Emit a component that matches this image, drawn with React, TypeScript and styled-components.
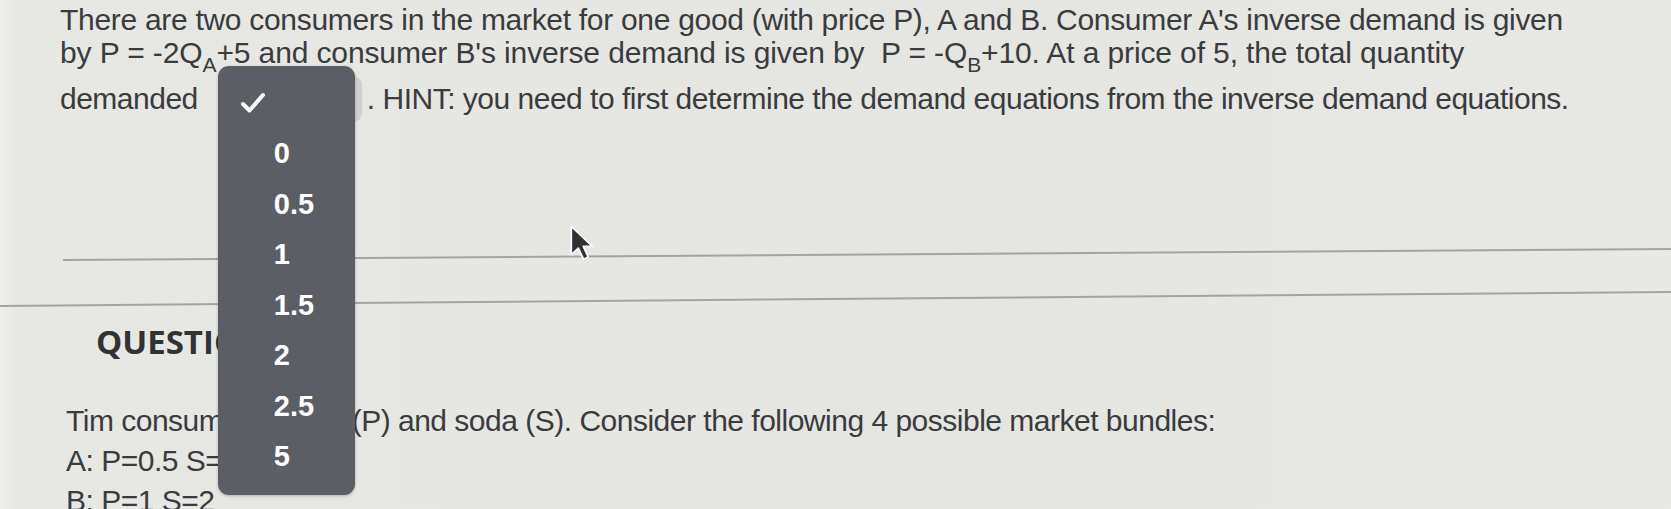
import React from "react";
import styled, { createGlobalStyle } from "styled-components";

const GlobalStyle = createGlobalStyle`
  html, body {
    margin: 0;
    padding: 0;
    background: #e6e6e3;
  }
  body {
    font-family: "Liberation Sans", Arial, sans-serif;
    overflow: hidden;
  }
`;

const Page = styled.div`
  position: relative;
  width: 1671px;
  height: 509px;
  overflow: hidden;
  background: linear-gradient(90deg, #efefed 0px, #e7e7e4 14px, #e5e5e2 60%, #e8e8e5 100%);
  color: #393b3d;
`;

const Section = styled.div<{ $pad: number; $top?: number }>`
  padding-left: ${(p) => p.$pad}px;
  padding-top: ${(p) => p.$top ?? 0}px;
`;

const Line = styled.div<{ $spacing: number }>`
  font-size: 30px;
  line-height: 33px;
  letter-spacing: ${(p) => p.$spacing}px;
  white-space: nowrap;
`;

const Sub = styled.span`
  font-size: 21px;
  line-height: 0;
  vertical-align: -9px;
`;

const SelectLine = styled.div`
  display: flex;
  align-items: center;
  height: 46px;
  margin-top: 7px;
  font-size: 30px;
  letter-spacing: -0.5px;
  white-space: nowrap;
`;

const SelectBox = styled.div`
  position: relative;
  width: 144px;
  height: 46px;
  margin-left: 20px;
  margin-right: 5px;
  border-radius: 9px;
  background: #cfd0ce;
`;

const Menu = styled.div`
  position: absolute;
  left: 0;
  top: -10px;
  z-index: 2;
  width: 137px;
  box-sizing: border-box;
  padding: 12px 0 13px;
  border-radius: 11px;
  background: #5b5f65;
  box-shadow: 0 1px 3px rgba(0, 0, 0, 0.25);
  display: flex;
  flex-direction: column;
  letter-spacing: 0;
`;

const MenuItem = styled.div<{ $indent: number }>`
  height: 50.5px;
  display: flex;
  align-items: center;
  padding-left: ${(p) => p.$indent}px;
  color: #ffffff;
  font-size: 29px;
  font-weight: 700;
  font-family: "Liberation Sans", Arial, sans-serif;
`;

const Rule = styled.div<{ $top: number; $left: number; $angle: number }>`
  margin-top: ${(p) => p.$top}px;
  margin-left: ${(p) => p.$left}px;
  height: 2px;
  background: #a3a3a1;
  transform-origin: left center;
  transform: rotate(${(p) => p.$angle}deg);
`;

const Heading = styled.div`
  margin-top: 15px;
  margin-left: 30px;
  font-family: "Open Sans", "Liberation Sans", sans-serif;
  font-weight: 700;
  font-size: 33px;
  line-height: 40px;
  color: #303234;
`;

const Para = styled.div`
  margin-top: 39px;
  font-size: 30px;
  line-height: 40px;
  letter-spacing: -0.5px;
  white-space: nowrap;
`;

const Cursor = styled.svg`
  position: absolute;
  left: 569px;
  top: 224px;
  z-index: 3;
`;

const options = ["0", "0.5", "1", "1.5", "2", "2.5", "5"];

export default function App() {
  return (
    <Page>
      <GlobalStyle />
      <Section $pad={60} $top={3}>
        <Line $spacing={-0.3}>
          There are two consumers in the market for one good (with price P), A and B. Consumer A's inverse demand is given
        </Line>
        <Line $spacing={-0.12}>
          by P = -2Q<Sub>A</Sub>+5 and consumer B's inverse demand is given by&nbsp; P = -Q<Sub>B</Sub>+10. At a price of 5, the total quantity
        </Line>
        <SelectLine>
          demanded
          <SelectBox>
            <Menu>
              <MenuItem $indent={22}>
                <svg width="26" height="22" viewBox="0 0 26 22">
                  <path d="M3 12 L9.5 18.5 L23 3" fill="none" stroke="#ffffff" strokeWidth="4" strokeLinecap="round" strokeLinejoin="round" />
                </svg>
              </MenuItem>
              {options.map((o) => (
                <MenuItem key={o} $indent={56}>
                  {o}
                </MenuItem>
              ))}
            </Menu>
          </SelectBox>
          . HINT: you need to first determine the demand equations from the inverse demand equations.
        </SelectLine>
        <Rule $top={137} $left={3} $angle={-0.39} />
      </Section>
      <Rule $top={44} $left={0} $angle={-0.48} />
      <Section $pad={66}>
        <Heading>QUESTION 2</Heading>
        <Para>
          Tim consumes pizzas (P) and soda (S). Consider the following 4 possible market bundles:
          <br />
          A: P=0.5 S=1
          <br />
          B: P=1 S=2
        </Para>
      </Section>
      <Cursor width="28" height="40" viewBox="0 0 24 34">
        <path d="M2 2 L2 26 L8 20.5 L12.5 30 L16.5 28.2 L12.2 19 L20 19 Z" fill="#2e3135" stroke="#ffffff" strokeWidth="1.4" strokeLinejoin="round" />
      </Cursor>
    </Page>
  );
}
